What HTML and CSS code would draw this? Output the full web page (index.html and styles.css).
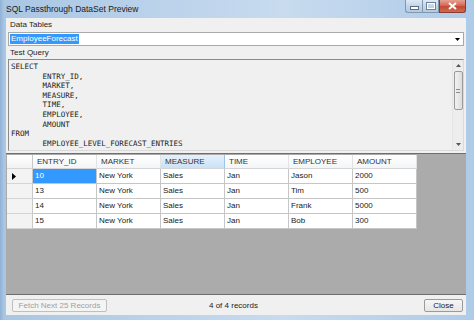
FILE: index.html
```html
<!DOCTYPE html>
<html>
<head>
<meta charset="utf-8">
<link rel="stylesheet" href="styles.css">
</head>
<body>
<div class="window">
  <div class="titlebar">
    <span class="title">SQL Passthrough DataSet Preview</span>
    <div class="controls">
      <div class="cbtn min"><span class="minbar"></span></div>
      <div class="cbtn max"><span class="maxbox"></span></div>
      <div class="cbtn close">
        <svg width="11" height="8" viewBox="0 0 11 8"><path d="M2 1 L9 7 M9 1 L2 7" stroke="#fff" stroke-width="2"/></svg>
      </div>
    </div>
  </div>
  <div class="client">
    <div class="label">Data Tables</div>
    <div class="combo">
      <span class="combo-sel">EmployeeForecast</span>
      <svg class="combo-arrow" width="5" height="3" viewBox="0 0 5 3"><path d="M0 0 H5 L2.5 3 Z" fill="#000"/></svg>
    </div>
    <div class="label">Test Query</div>
    <div class="query">
      <pre class="sql">SELECT
       ENTRY_ID,
       MARKET,
       MEASURE,
       TIME,
       EMPLOYEE,
       AMOUNT
FROM
       EMPLOYEE_LEVEL_FORECAST_ENTRIES</pre>
      <div class="vscroll">
        <svg class="sarrow" width="5" height="3" viewBox="0 0 5 3"><path d="M0 3 H5 L2.5 0 Z" fill="#555"/></svg>
        <div class="thumb"><span class="grip"></span></div>
        <svg class="sarrow down" width="5" height="3" viewBox="0 0 5 3"><path d="M0 0 H5 L2.5 3 Z" fill="#555"/></svg>
      </div>
    </div>
    <div class="grid">
      <div class="table">
        <div class="row head">
          <div class="rh"></div>
          <div class="hc">ENTRY_ID</div>
          <div class="hc">MARKET</div>
          <div class="hc sel">MEASURE</div>
          <div class="hc">TIME</div>
          <div class="hc">EMPLOYEE</div>
          <div class="hc">AMOUNT</div>
        </div>
        <div class="row">
          <div class="rh"><svg width="4" height="7" viewBox="0 0 4 7"><path d="M0 0 L4 3.5 L0 7 Z" fill="#000"/></svg></div>
          <div class="c cur">10</div><div class="c">New York</div><div class="c">Sales</div><div class="c">Jan</div><div class="c">Jason</div><div class="c">2000</div>
        </div>
        <div class="row">
          <div class="rh"></div>
          <div class="c">13</div><div class="c">New York</div><div class="c">Sales</div><div class="c">Jan</div><div class="c">Tim</div><div class="c">500</div>
        </div>
        <div class="row">
          <div class="rh"></div>
          <div class="c">14</div><div class="c">New York</div><div class="c">Sales</div><div class="c">Jan</div><div class="c">Frank</div><div class="c">5000</div>
        </div>
        <div class="row">
          <div class="rh"></div>
          <div class="c">15</div><div class="c">New York</div><div class="c">Sales</div><div class="c">Jan</div><div class="c">Bob</div><div class="c">300</div>
        </div>
      </div>
    </div>
    <div class="footer">
      <div class="btn disabled">Fetch Next 25 Records</div>
      <div class="count">4 of 4 records</div>
      <div class="btn close-btn">Close</div>
    </div>
  </div>
</div>
</body>
</html>
```
FILE: styles.css
```css
html, body {
  margin: 0;
  padding: 0;
  width: 474px;
  height: 320px;
  overflow: hidden;
  background: #9fbedc;
}
.window {
  width: 474px;
  height: 320px;
  box-sizing: border-box;
  padding: 0 8px 5px 6px;
  display: flex;
  flex-direction: column;
  background: linear-gradient(90deg, #8fb1d3 0px, #a9c6e3 4px, #b9d1ea 30%, #c8dbef 60%, #aecbe8 100%);
  font-family: "Liberation Sans", Arial, sans-serif;
  color: #000;
}
.titlebar {
  height: 18px;
  flex: none;
  display: flex;
  align-items: flex-start;
  justify-content: space-between;
}
.title {
  font-size: 8.5px;
  line-height: 10px;
  padding-top: 4px;
  color: #1b1b1b;
}
.controls {
  display: flex;
  height: 13px;
}
.cbtn {
  height: 13px;
  border: 1px solid #7f97b1;
  border-top: none;
  box-sizing: border-box;
  display: flex;
  align-items: center;
  justify-content: center;
}
.min, .max {
  width: 17px;
  background: linear-gradient(#dfe9f4, #c3d5e8 50%, #b3c9df);
}
.min { border-radius: 0 0 0 3px; border-right: none; }
.minbar { width: 7px; height: 2px; background: #fff; border: 1px solid #5a6d84; margin-top: 4px; }
.maxbox { width: 6px; height: 4px; border: 1px solid #fff; outline: 1px solid #6d8199; }
.close {
  width: 27px;
  border-color: #8a3b30;
  border-radius: 0 0 3px 0;
  background: linear-gradient(#e6a192, #d46b58 45%, #c54a35 55%, #d06a50);
}
.client {
  flex: 1;
  background: #f0f0f0;
  display: flex;
  flex-direction: column;
  padding: 0 2px;
}
.label {
  font-size: 8px;
  line-height: 10px;
  height: 12px;
  padding: 2px 0 0 2px;
  box-sizing: border-box;
  color: #222;
}
.combo {
  height: 14px;
  background: #fff;
  border: 1px solid #a9a9a9;
  box-sizing: border-box;
  display: flex;
  align-items: center;
  justify-content: space-between;
  padding: 0 3px 0 1px;
  margin-top: 2px;
}
.combo-sel {
  background: #3399ff;
  color: #fff;
  font-size: 8px;
  line-height: 10px;
  padding: 0 1px;
}
.query {
  height: 90px;
  margin-top: 1px;
  background: #f0f0f0;
  border: 1px solid #8a8a8a;
  border-right-color: #dadada;
  border-bottom-color: #dadada;
  display: flex;
  justify-content: space-between;
}
.sql {
  margin: 0;
  padding: 2px 0 0 2px;
  font-family: "DejaVu Sans Mono", monospace;
  font-size: 7.5px;
  line-height: 9.6px;
  color: #222;
  white-space: pre;
}
.vscroll {
  width: 11px;
  background: #ededed;
  display: flex;
  flex-direction: column;
  align-items: center;
  padding: 3px 0;
  box-sizing: border-box;
  border-left: 1px solid #e6e6e6;
}
.sarrow { flex: none; margin-top: 1px; }
.sarrow.down { margin-top: auto; margin-bottom: 1px; }
.thumb {
  width: 9px;
  height: 39px;
  margin-top: 4px;
  border: 1px solid #9a9a9a;
  border-radius: 2px;
  box-sizing: border-box;
  background: linear-gradient(90deg, #f2f2f2, #dcdcdc);
  display: flex;
  align-items: center;
  justify-content: center;
}
.grip {
  width: 4px;
  height: 4px;
  border-top: 1px solid #8a8a8a;
  border-bottom: 1px solid #8a8a8a;
  box-sizing: border-box;
}
.grid {
  margin: 2px -2px 0 -2px;
  height: 142px;
  background: #ababab;
  border-top: 1px solid #6e6e6e;
  border-bottom: 1px solid #6e6e6e;
  box-sizing: border-box;
  padding-top: 1px;
  padding-left: 1px;
}
.table {
  display: flex;
  flex-direction: column;
  width: 410px;
}
.row {
  display: grid;
  grid-template-columns: 26px repeat(6, 64px);
  height: 15px;
  background: #fff;
}
.row.head {
  height: 14px;
  background: linear-gradient(#ffffff, #f3f4f6);
}
.rh {
  background: #f3f3f3;
  border-right: 1px solid #c8c8c8;
  border-bottom: 1px solid #d4d4d4;
  display: flex;
  align-items: center;
  padding-left: 5px;
}
.head .rh { background: linear-gradient(#ffffff, #f1f2f4); }
.hc {
  font-size: 8px;
  line-height: 13px;
  padding-left: 4px;
  color: #333;
  border-right: 1px solid #e2e3e5;
  border-bottom: 1px solid #d5d5d5;
}
.hc.sel {
  background: linear-gradient(#e6f1fb, #c9e2f7);
  border-right-color: #9dc3e6;
}
.c {
  font-size: 8px;
  line-height: 14px;
  padding-left: 2px;
  border-right: 1px solid #c6c6c6;
  border-bottom: 1px solid #c6c6c6;
  color: #222;
}
.c.cur {
  background: #3399ff;
  color: #fff;
}
.footer {
  flex: 1;
  display: flex;
  align-items: center;
  padding: 0 1px 0 4px;
}
.btn {
  height: 13px;
  box-sizing: border-box;
  font-size: 8px;
  line-height: 11px;
  text-align: center;
  border: 1px solid #acacac;
  border-radius: 2px;
  background: linear-gradient(#f6f6f6, #e6e6e6);
}
.btn.disabled {
  width: 95px;
  color: #a0a0a0;
  border-color: #bfbfbf;
  background: #f4f4f4;
}
.count {
  font-size: 8px;
  margin-left: 102px;
  color: #222;
}
.close-btn {
  margin-left: auto;
  width: 39px;
  color: #222;
  border-color: #9a9a9a;
  margin-top: 1px;
}
```
